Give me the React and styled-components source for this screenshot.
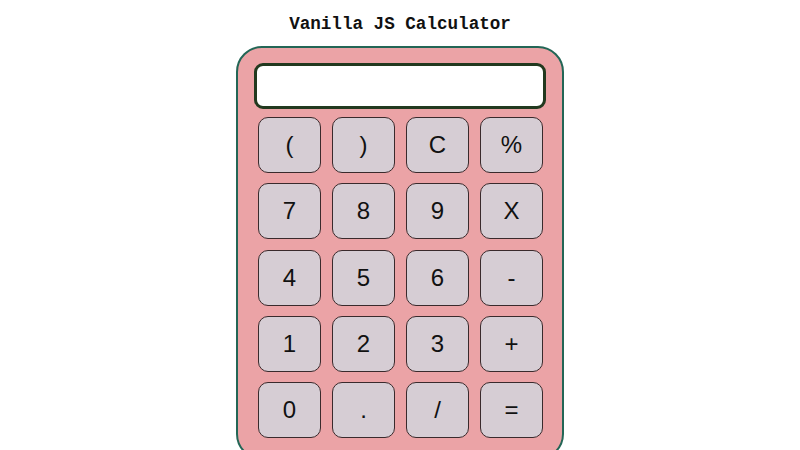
import React, { useState } from "react";
import styled, { createGlobalStyle } from "styled-components";

const GlobalStyle = createGlobalStyle`
  body {
    margin: 0;
    background: #ffffff;
    font-family: "Liberation Sans", Arial, sans-serif;
  }
`;

const Page = styled.div`
  display: flex;
  flex-direction: column;
  align-items: center;
  padding-top: 14px;
`;

const Title = styled.h1`
  margin: 0 0 12px;
  font-family: "Liberation Mono", "Courier New", monospace;
  font-size: 17.6px;
  font-weight: bold;
  color: #111;
  line-height: 20px;
`;

const Body = styled.div`
  box-sizing: border-box;
  width: 328px;
  background: #eba3a6;
  border: 2px solid #236656;
  border-radius: 26px;
  padding: 15px 16px 20px;
  display: flex;
  flex-direction: column;
  gap: 8px;
`;

const Screen = styled.input`
  box-sizing: border-box;
  width: 100%;
  height: 46px;
  border: 3px solid #22391f;
  border-radius: 9px;
  background: #fff;
  font-family: "Liberation Sans", Arial, sans-serif;
  font-size: 24px;
  text-align: right;
  padding: 0 10px;
  outline: none;
`;

const Keys = styled.div`
  display: grid;
  grid-template-columns: repeat(4, 63px);
  grid-auto-rows: 56px;
  column-gap: 11px;
  row-gap: 10.25px;
  padding: 0 4px;
`;

const Key = styled.button`
  background: #d6cdd4;
  border: 1px solid #3a2a2c;
  border-radius: 10px;
  font-family: "Liberation Sans", Arial, sans-serif;
  font-size: 24px;
  color: #111;
  padding: 0;
  cursor: pointer;
`;

const rows = ["(", ")", "C", "%", "7", "8", "9", "X", "4", "5", "6", "-", "1", "2", "3", "+", "0", ".", "/", "="];

export default function App() {
  const [value, setValue] = useState("");

  const press = (k) => {
    if (k === "C") return setValue("");
    if (k === "=") {
      try {
        // eslint-disable-next-line no-new-func
        setValue(String(Function(`return (${value.replace(/X/g, "*")})`)()));
      } catch (e) {
        setValue("Error");
      }
      return;
    }
    setValue((v) => v + k);
  };

  return (
    <>
      <GlobalStyle />
      <Page>
        <Title>Vanilla JS Calculator</Title>
        <Body>
          <Screen value={value} readOnly />
          <Keys>
            {rows.map((k) => (
              <Key key={k} onClick={() => press(k)}>
                {k}
              </Key>
            ))}
          </Keys>
        </Body>
      </Page>
    </>
  );
}
